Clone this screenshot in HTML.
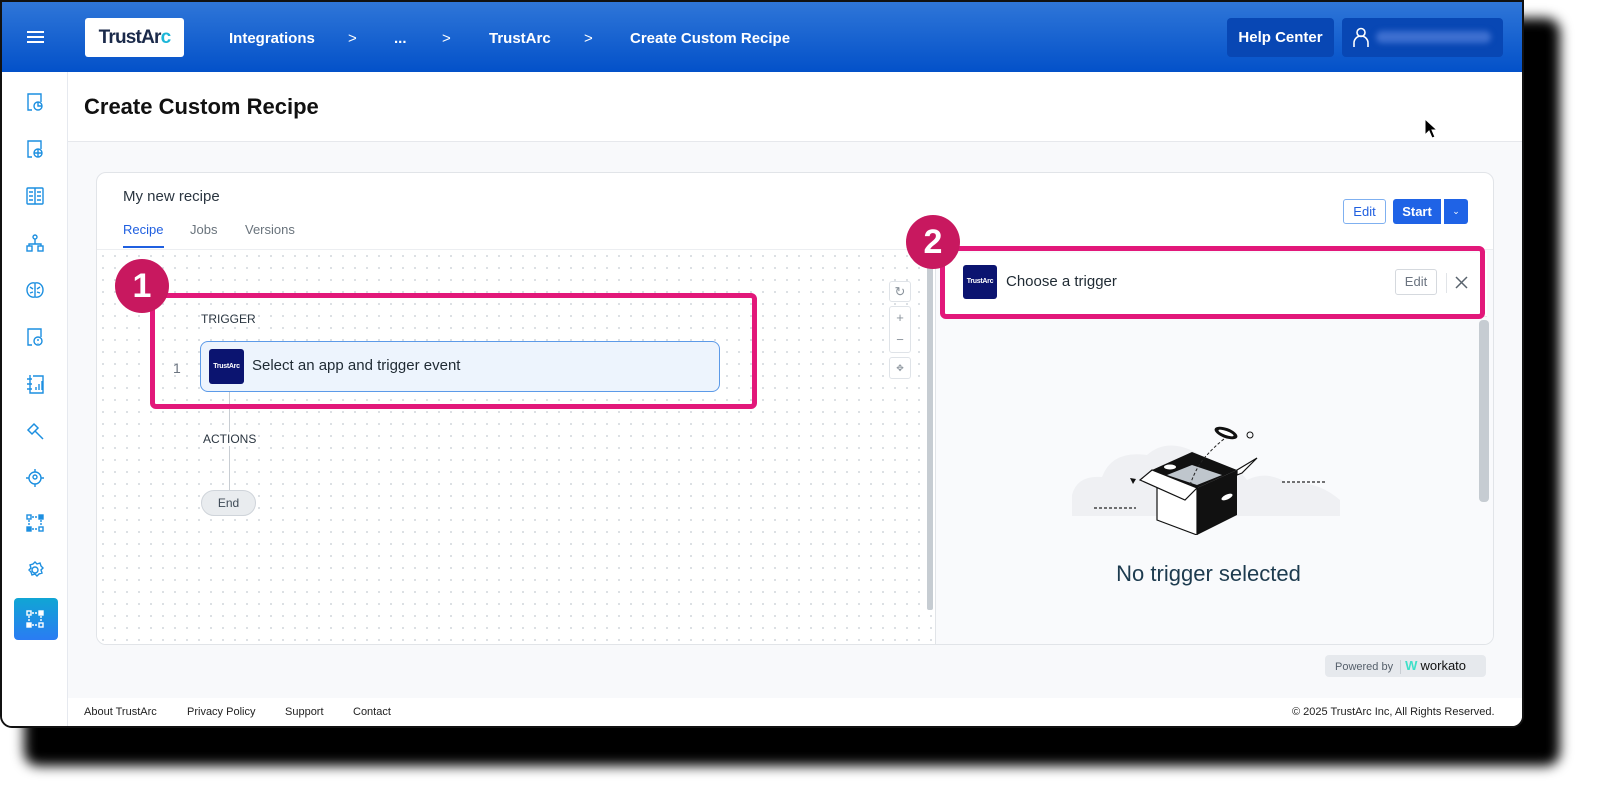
<!DOCTYPE html>
<html><head><meta charset="utf-8"><style>
*{box-sizing:border-box;margin:0;padding:0}
body{width:1600px;height:788px;background:#fff;position:relative;overflow:hidden;font-family:"Liberation Sans",sans-serif}
.abs{position:absolute}
.shadow{position:absolute;left:24px;top:18px;width:1536px;height:748px;background:#000;border-radius:14px;filter:blur(6px)}
.frame{position:absolute;left:0;top:0;width:1524px;height:728px;background:#f8f9fb;border:2px solid #111;border-top-width:2px;border-radius:0 0 12px 12px;overflow:hidden}
.hdr{position:absolute;left:0;top:0;width:100%;height:70px;background:linear-gradient(#2f76d8,#0351c9)}
.bc{position:absolute;top:28px;color:#fff;font-size:15px;font-weight:bold}
.side{position:absolute;left:0;top:70px;width:66px;height:660px;background:#fff;border-right:1px solid #e6e9ef}
.side svg{position:absolute;left:24px}
.card{position:absolute;left:94px;top:170px;width:1398px;height:473px;background:#fff;border:1px solid #e1e4e8;border-radius:10px;overflow:hidden}
.pink{position:absolute;border:5px solid #e2187a;border-radius:6px}
.badge{position:absolute;width:54px;height:54px;border-radius:50%;background:#c8185f;color:#fff;font-size:34px;font-weight:bold;text-align:center;line-height:54px}
.ta{font-size:7px;color:#fff;text-align:center;background:#0b1470;border-radius:3px;position:absolute;font-weight:bold;letter-spacing:-0.3px}
.zb{position:absolute;left:792px;width:22px;background:#fff;border:1px solid #dfe3e8;border-radius:3px;color:#8a939c;font-size:13px;text-align:center}
.fl{position:absolute;top:704px;font-size:11px;color:#222}
</style></head><body>
<div class="shadow"></div>
<div class="frame">
 <div class="hdr">
  <div class="abs" style="left:25px;top:29px;width:17px;height:2px;background:#fff;box-shadow:0 5px 0 #fff,0 10px 0 #fff"></div>
  <div class="abs" style="left:83px;top:16px;width:99px;height:39px;background:#fff;border-radius:3px;font-size:19px;font-weight:bold;color:#1b2a4a;line-height:39px;text-align:center;letter-spacing:-0.8px">TrustAr<span style="color:#1cb6d8">c</span></div>
  <div class="bc" style="left:227px">Integrations</div>
  <div class="bc" style="left:346px;font-weight:normal">&gt;</div>
  <div class="bc" style="left:392px">...</div>
  <div class="bc" style="left:440px;font-weight:normal">&gt;</div>
  <div class="bc" style="left:487px">TrustArc</div>
  <div class="bc" style="left:582px;font-weight:normal">&gt;</div>
  <div class="bc" style="left:628px">Create Custom Recipe</div>
  <div class="abs" style="left:1225px;top:16px;width:107px;height:39px;background:#0847b4;border-radius:4px;color:#fff;font-size:15px;font-weight:bold;line-height:39px;text-align:center">Help Center</div>
  <div class="abs" style="left:1340px;top:16px;width:161px;height:39px;background:#0847b4;border-radius:4px">
   <svg class="abs" style="left:10px;top:9px" width="18" height="21" viewBox="0 0 18 21" fill="none" stroke="#fff" stroke-width="1.6"><circle cx="9" cy="5.5" r="4"/><path d="M2 20v-4a7 7 0 0 1 14 0v4"/></svg>
   <div class="abs" style="left:34px;top:13px;width:115px;height:12px;background:#3d6fd0;border-radius:6px;filter:blur(3px)"></div>
  </div>
 </div>
 <div class="side">
  <svg style="top:20px" width="18" height="20" viewBox="0 0 18 20" fill="none" stroke="#1c8fe0" stroke-width="1.4"><path d="M6 18H2V2h13v8"/><circle cx="12" cy="14" r="4"/><path d="M12 10v4h4"/></svg>
  <svg style="top:67px" width="18" height="20" viewBox="0 0 18 20" fill="none" stroke="#1c8fe0" stroke-width="1.4"><path d="M6 18H2V2h13v8"/><circle cx="12" cy="14" r="4"/><path d="M8 14h8M12 10v8"/></svg>
  <svg style="top:115px" width="18" height="18" viewBox="0 0 18 18" fill="none" stroke="#1c8fe0" stroke-width="1.4"><rect x="1" y="1" width="16" height="16" rx="1"/><path d="M9 1v16M3 5h4M3 9h4M3 13h4M11 5h4M11 9h4M11 13h4"/></svg>
  <svg style="top:162px" width="18" height="18" viewBox="0 0 18 18" fill="none" stroke="#1c8fe0" stroke-width="1.4"><circle cx="9" cy="3" r="2"/><path d="M9 5v5M3 12V10h12v2"/><rect x="1" y="12" width="5" height="5"/><rect x="12" y="12" width="5" height="5"/></svg>
  <svg style="top:209px" width="18" height="18" viewBox="0 0 18 18" fill="none" stroke="#1c8fe0" stroke-width="1.4"><path d="M9 2C4 1 1 5 1 9s3 8 8 7c5 1 8-3 8-7s-3-8-8-7zM9 2v14M4 6l3 2M14 6l-3 2M4 12l3-1M14 12l-3-1"/></svg>
  <svg style="top:255px" width="18" height="20" viewBox="0 0 18 20" fill="none" stroke="#1c8fe0" stroke-width="1.4"><path d="M6 18H2V2h13v8"/><circle cx="12" cy="14" r="4"/><path d="M12 12v2M12 16v.5"/></svg>
  <svg style="top:302px" width="18" height="20" viewBox="0 0 18 20" fill="none" stroke="#1c8fe0" stroke-width="1.4"><path d="M4 1v18h13V2H7M1 5h5M1 10h5M1 15h5M10 16v-3M13 16v-6M16 16V7"/></svg>
  <svg style="top:350px" width="18" height="20" viewBox="0 0 18 20" fill="none" stroke="#1c8fe0" stroke-width="1.5"><path d="M2 8l6-6 4 4-6 6zM9 9l8 8"/></svg>
  <svg style="top:397px" width="18" height="18" viewBox="0 0 18 18" fill="none" stroke="#1c8fe0" stroke-width="1.4"><circle cx="9" cy="9" r="6"/><circle cx="9" cy="8" r="2"/><path d="M9 0v3M9 15v3M0 9h3M15 9h3"/></svg>
  <svg style="top:442px" width="18" height="18" viewBox="0 0 18 18" fill="none" stroke="#1c8fe0" stroke-width="1.4"><rect x="1" y="1" width="4" height="4"/><rect x="13" y="1" width="4" height="4" fill="#1c8fe0"/><rect x="1" y="13" width="4" height="4" fill="#1c8fe0"/><rect x="13" y="13" width="4" height="4"/><path d="M6 3h6M6 15h6M3 6v6M15 6v6" stroke-dasharray="2 1"/></svg>
  <svg style="top:489px" width="18" height="18" viewBox="0 0 18 18" fill="none" stroke="#1c8fe0" stroke-width="1.4"><circle cx="9" cy="9" r="3"/><path d="M9 1l2 2 3-1 1 3 2 2-2 2 1 3-3 1-2 2-2-2-3 1-1-3-2-2 2-2-1-3 3-1z"/></svg>
  <div class="abs" style="left:12px;top:526px;width:44px;height:42px;border-radius:4px;background:linear-gradient(#10a6d4,#2a7cf3)"></div>
  <svg style="top:538px" width="18" height="18" viewBox="0 0 18 18" fill="none" stroke="#fff" stroke-width="1.4"><rect x="1" y="1" width="4" height="4"/><rect x="13" y="1" width="4" height="4" fill="#fff"/><rect x="1" y="13" width="4" height="4" fill="#fff"/><rect x="13" y="13" width="4" height="4"/><path d="M6 3h6M6 15h6M3 6v6M15 6v6" stroke-dasharray="2 1"/></svg>
 </div>
 <div class="abs" style="left:66px;top:70px;width:1460px;height:70px;background:#fff;border-bottom:1px solid #e6e8ec"></div>
 <div class="abs" style="left:82px;top:92px;font-size:22px;font-weight:bold;color:#111">Create Custom Recipe</div>
 <svg class="abs" style="left:1422px;top:116px" width="14" height="22" viewBox="0 0 14 22"><path d="M1 1v16l4-4 3 7 3-1-3-7h5z" fill="#000" stroke="#fff"/></svg>

 <div class="card">
  <div class="abs" style="left:26px;top:15px;font-size:15px;color:#2a3540">My new recipe</div>
  <div class="abs" style="left:26px;top:49px;font-size:13px;color:#1f5fe0">Recipe</div>
  <div class="abs" style="left:26px;top:73px;width:41px;height:2px;background:#1f5fe0"></div>
  <div class="abs" style="left:93px;top:49px;font-size:13px;color:#69737c">Jobs</div>
  <div class="abs" style="left:148px;top:49px;font-size:13px;color:#69737c">Versions</div>
  <div class="abs" style="left:1246px;top:26px;width:43px;height:25px;border:1px solid #7fb0f0;border-radius:3px;color:#1f5fe0;font-size:13px;text-align:center;line-height:23px">Edit</div>
  <div class="abs" style="left:1296px;top:26px;width:48px;height:25px;background:#1f63e6;border-radius:3px 0 0 3px;color:#fff;font-size:13px;font-weight:bold;text-align:center;line-height:25px">Start</div>
  <div class="abs" style="left:1347px;top:26px;width:24px;height:25px;background:#1f63e6;border-radius:0 3px 3px 0;color:#fff;font-size:9px;text-align:center;line-height:25px">&#8964;</div>
  <div class="abs" style="left:0;top:76px;width:1398px;height:1px;background:#eceef1"></div>
  <div class="abs" style="left:0;top:77px;width:838px;height:400px;background-color:#fff;background-image:radial-gradient(#d9dde2 1px,transparent 1.2px);background-size:12px 12px"></div>
  <div class="abs" style="left:830px;top:77px;width:6px;height:360px;background:#c6ccd2;border-radius:2px"></div>
  <div class="abs" style="left:838px;top:77px;width:1px;height:400px;background:#e1e4e8"></div>
  <div class="abs" style="left:839px;top:77px;width:560px;height:400px;background:#f9fafc"></div>
  <div class="abs" style="left:845px;top:80px;width:545px;height:64px;background:#fff;border-bottom:1px solid #e6e8ec"></div>
  <div class="abs" style="left:1382px;top:147px;width:10px;height:182px;background:#c6ccd2;border-radius:4px"></div>
  <div class="zb" style="top:108px;height:21px;line-height:19px">&#8635;</div>
  <div class="zb" style="top:133px;height:47px;line-height:22px">+<br>&minus;</div>
  <div class="zb" style="top:184px;height:22px;line-height:20px;font-size:9px">&#10021;</div>
  <div class="abs" style="left:104px;top:139px;font-size:12px;color:#2a3540">TRIGGER</div>
  <div class="abs" style="left:76px;top:187px;font-size:14px;color:#6b7480">1</div>
  <div class="abs" style="left:132px;top:218px;width:1px;height:100px;background:#c8cdd3"></div>
  <div class="abs" style="left:103px;top:168px;width:520px;height:51px;background:#edf4fd;border:1.5px solid #5c9ae8;border-radius:8px"></div>
  <div class="ta" style="left:112px;top:176px;width:35px;height:35px;line-height:35px">TrustArc</div>
  <div class="abs" style="left:155px;top:184px;font-size:15px;color:#1f2a33">Select an app and trigger event</div>
  <div class="abs" style="left:106px;top:259px;font-size:12px;color:#2a3540;background:#fff">ACTIONS</div>
  <div class="abs" style="left:104px;top:317px;width:55px;height:26px;background:#e9ecef;border:1px solid #cfd4da;border-radius:13px;font-size:12px;color:#3e4a56;text-align:center;line-height:24px">End</div>
  <div class="ta" style="left:866px;top:92px;width:34px;height:34px;line-height:34px">TrustArc</div>
  <div class="abs" style="left:909px;top:100px;font-size:15px;color:#1f2a33">Choose a trigger</div>
  <div class="abs" style="left:1298px;top:96px;width:42px;height:26px;border:1px solid #d5d9de;border-radius:3px;font-size:13px;color:#6b7480;text-align:center;line-height:24px">Edit</div>
  <div class="abs" style="left:1349px;top:100px;width:1px;height:20px;background:#e1e4e8"></div>
  <svg class="abs" style="left:1358px;top:103px" width="13" height="13" viewBox="0 0 13 13" stroke="#59636d" stroke-width="1.5"><path d="M1 1l11 11M12 1L1 12"/></svg>
  <svg class="abs" style="left:975px;top:252px" width="270" height="110" viewBox="0 0 270 110">
   <path d="M0 70 Q5 50 30 52 Q40 25 75 30 Q95 12 125 28 L140 40 Q165 40 175 55 Q195 45 215 58 Q245 55 268 75 L268 91 L0 91Z" fill="#eff0f3"/>
   <path d="M22 83h42M210 57h44" stroke="#222" stroke-width="1.2" stroke-dasharray="3 2"/>
   <path d="M58 53l6 1-3 5z" fill="#111"/>
   <path d="M80 45l40-18 45 18-40 18z" fill="#111"/>
   <path d="M125 63l40-18v45l-40 20z" fill="#111"/>
   <path d="M85 50l40 13v47l-40-15z" fill="#fff" stroke="#111" stroke-width="1.2"/>
   <path d="M95 50l25-10 30 10-25 10z" fill="#bfc6cd"/>
   <path d="M80 45l-12 10 45 20 12-12z" fill="#fff" stroke="#111" stroke-width="1.2"/>
   <path d="M165 45l20-12-15 15-5 2z" fill="#fff" stroke="#111" stroke-width="1.2"/>
   <ellipse cx="98" cy="42" rx="6" ry="2.5" fill="#fff"/>
   <ellipse cx="155" cy="72" rx="6" ry="2.5" fill="#fff" transform="rotate(-25 155 72)"/>
   <path d="M118 60 Q125 40 135 30 Q142 22 152 14" stroke="#222" fill="none" stroke-width="1" stroke-dasharray="3 2"/>
   <ellipse cx="154" cy="8" rx="12" ry="5" fill="#111" transform="rotate(20 154 8)"/>
   <ellipse cx="154" cy="8" rx="8" ry="2" fill="#fff" transform="rotate(20 154 8)"/>
   <circle cx="178" cy="10" r="3" fill="none" stroke="#111"/>
  </svg>
  <div class="abs" style="left:839px;top:388px;width:545px;text-align:center;font-size:22px;color:#1d3b4f">No trigger selected</div>
 </div>
 <div class="pink" style="left:148px;top:291px;width:607px;height:116px"></div>
 <div class="badge" style="left:113px;top:257px">1</div>
 <div class="pink" style="left:938px;top:244px;width:545px;height:73px"></div>
 <div class="badge" style="left:904px;top:213px">2</div>
 <div class="abs" style="left:1323px;top:653px;width:161px;height:22px;background:#e6e9ed;border-radius:4px;font-size:11px;color:#56606b;line-height:22px;padding-left:10px">Powered by <span style="display:inline-block;width:1px;height:14px;background:#c9ced4;vertical-align:middle;margin:0 4px 0 4px"></span><span style="color:#3fe0c8;font-weight:bold;font-size:13px">W</span> <span style="color:#111;font-size:13px">workato</span></div>
 <div class="abs" style="left:66px;top:696px;width:1460px;height:32px;background:#fff"></div>
 <div class="fl" style="left:82px">About TrustArc</div>
 <div class="fl" style="left:185px">Privacy Policy</div>
 <div class="fl" style="left:283px">Support</div>
 <div class="fl" style="left:351px">Contact</div>
 <div class="fl" style="left:1290px">© 2025 TrustArc Inc, All Rights Reserved.</div>
</div>
</body></html>
